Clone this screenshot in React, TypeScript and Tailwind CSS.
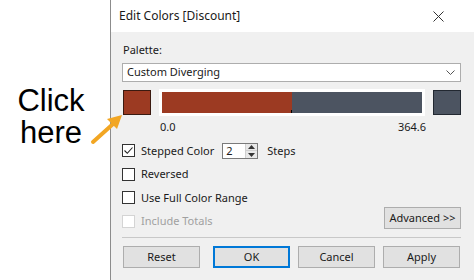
import React from "react";

const ui = { fontFamily: '"Noto Sans", "Open Sans", sans-serif' };

function Check({ checked, disabled, label }: { checked?: boolean; disabled?: boolean; label: string }) {
  return (
    <div className="flex items-center h-[23.5px]">
      <div
        className={
          "w-[13px] h-[13px] border bg-white flex items-center justify-center " +
          (disabled ? "border-[#d4d4d4]" : "border-[#333333]")
        }
      >
        {checked && (
          <svg width="11" height="11" viewBox="0 0 11 11">
            <path d="M1.5 5.5 L4.3 8.3 L9.5 2.5" fill="none" stroke="#222" strokeWidth="1.1" />
          </svg>
        )}
      </div>
      <span className={"ml-[6px] " + (disabled ? "text-[#a0a0a0]" : "text-[#1a1a1a]")}>{label}</span>
    </div>
  );
}

function Btn({ label, primary, className }: { label: string; primary?: boolean; className?: string }) {
  return (
    <div
      className={
        "w-[77px] h-[22px] flex items-center justify-center bg-[#e1e1e1] text-[#1a1a1a] " +
        (primary ? "border-2 border-[#0078d7]" : "border border-[#adadad]") +
        " " +
        (className || "")
      }
    >
      {label}
    </div>
  );
}

export default function App() {
  return (
    <div className="w-[474px] h-[280px] bg-white flex relative overflow-hidden">
      {/* callout */}
      <div className="w-[110px] flex flex-col items-center pt-[85px]">
        <div
          className="text-[31px] leading-[32px] text-black text-center pr-[8px]"
          style={{ fontFamily: '"Liberation Sans", Arial, sans-serif' }}
        >
          Click
          <br />
          here
        </div>
      </div>

      {/* dialog */}
      <div className="flex-1 border-l border-[#8c8c8c] flex flex-col text-[11px]" style={ui}>
        <div className="h-[32px] bg-white flex items-center pl-[8px] pr-[30px] justify-between">
          <span className="text-[12px] text-[#1a1a1a]">Edit Colors [Discount]</span>
          <svg width="11" height="11" viewBox="0 0 11 11">
            <path d="M0.5 0.5 L10.5 10.5 M10.5 0.5 L0.5 10.5" stroke="#333" strokeWidth="1" />
          </svg>
        </div>

        <div className="flex-1 bg-[#f0f0f0] pl-[11px] pr-[13px] flex flex-col">
          <div className="pt-[10px] h-[31px] leading-[16px] pl-[1px] text-[#1a1a1a]">Palette:</div>
          <div className="h-[19px] bg-white border border-[#adadad] flex items-center justify-between pl-[4px] pr-[5px] text-[#1a1a1a]">
            <span>Custom Diverging</span>
            <svg width="9" height="6" viewBox="0 0 9 6">
              <path d="M0.5 0.5 L4.5 4.5 L8.5 0.5" fill="none" stroke="#555" strokeWidth="1" />
            </svg>
          </div>

          <div className="flex items-center mt-[7px] h-[26px]">
            <div className="ml-[1px] w-[28px] h-[25px] bg-[#9c3a22] border border-[#3a1a10]" />
            <div className="ml-[8px] w-[266px] h-[27px] bg-white p-[3px] flex">
              <div className="w-[130px] h-full bg-[#9c3a22] relative">
                <div className="absolute right-0 bottom-0 w-[1px] h-[3px] bg-black" />
              </div>
              <div className="flex-1 h-full bg-[#4c5461]" />
            </div>
            <div className="ml-[8px] w-[28px] h-[25px] bg-[#4c5461] border border-[#222831]" />
          </div>

          <div className="flex justify-between items-center h-[24px] pl-[38px] pr-[35px] text-[#1a1a1a]">
            <span>0.0</span>
            <span>364.6</span>
          </div>

          <div className="flex items-end justify-between">
            <div className="flex flex-col">
              <div className="flex items-center h-[23.5px]">
                <Check checked label="Stepped Color" />
                <div className="ml-[8px] w-[36px] h-[16px] bg-white border border-[#7a7a7a] flex items-center">
                  <span className="pl-[3px] flex-1 text-[#1a1a1a]">2</span>
                  <div className="w-[12px] h-full flex flex-col border-l border-[#d0d0d0]">
                    <div className="flex-1 bg-[#e8e8e8] flex items-center justify-center border-b border-[#d0d0d0]">
                      <svg width="7" height="4" viewBox="0 0 7 4">
                        <path d="M0 4 L3.5 0 L7 4 Z" fill="#333" />
                      </svg>
                    </div>
                    <div className="flex-1 bg-[#e8e8e8] flex items-center justify-center">
                      <svg width="7" height="4" viewBox="0 0 7 4">
                        <path d="M0 0 L3.5 4 L7 0 Z" fill="#333" />
                      </svg>
                    </div>
                  </div>
                </div>
                <span className="ml-[9px] text-[#1a1a1a]">Steps</span>
              </div>
              <Check label="Reversed" />
              <Check label="Use Full Color Range" />
              <Check disabled label="Include Totals" />
            </div>
            <div className="w-[77px] h-[22px] mb-[4px] flex items-center justify-center bg-[#e1e1e1] border border-[#adadad] text-[#1a1a1a]">
              Advanced &gt;&gt;
            </div>
          </div>

          <div className="mt-[4px] h-[1px] bg-[#c8c8c8]" />

          <div className="flex mt-[8px] pl-[1px]">
            <Btn label="Reset" />
            <Btn label="OK" primary className="ml-[13px]" />
            <Btn label="Cancel" className="ml-[8px]" />
            <Btn label="Apply" className="ml-[8px]" />
          </div>
        </div>
      </div>

      {/* arrow */}
      <svg className="absolute left-0 top-0" width="474" height="280" viewBox="0 0 474 280">
        <path d="M93 142 L113 124" stroke="#f2a623" strokeWidth="4" strokeLinecap="round" />
        <path d="M122 115 L107 119 L117 129 Z" fill="#f2a623" />
      </svg>
    </div>
  );
}
